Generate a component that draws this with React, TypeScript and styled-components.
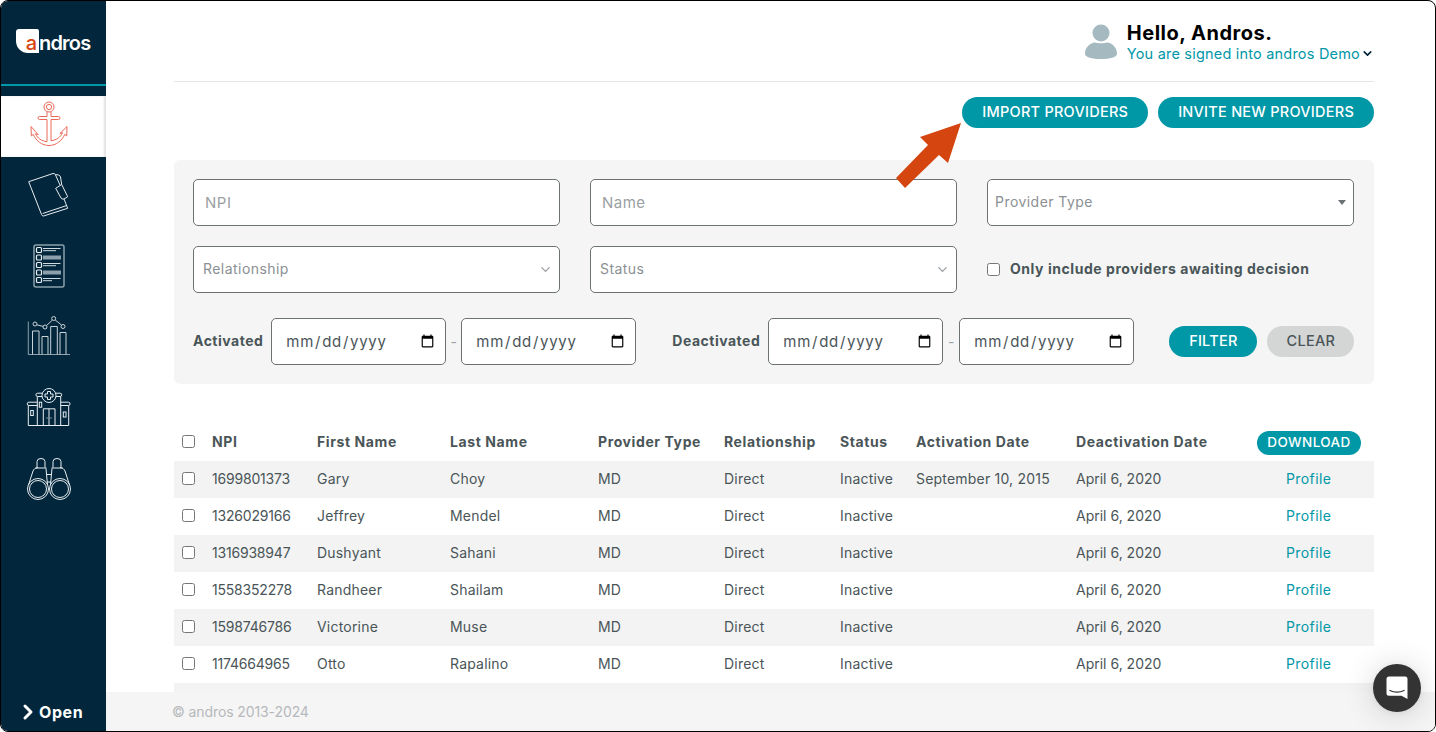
import React from "react";
import styled, { createGlobalStyle } from "styled-components";
import { ChevronDown, ChevronRight } from "lucide-react";

const TEAL = "#0097a7";
const NAVY = "#02263c";
const FONT = `Inter, "Open Sans", "Liberation Sans", sans-serif`;

const GlobalStyle = createGlobalStyle`
  html, body { margin: 0; padding: 0; background: #fff; }
  * { box-sizing: border-box; }
  body { font-family: ${FONT}; color: #4a5558; }
`;

type Provider = { npi: string; first: string; last: string; activated?: string };

const PROVIDERS: Provider[] = [
  { npi: "1699801373", first: "Gary", last: "Choy", activated: "September 10, 2015" },
  { npi: "1326029166", first: "Jeffrey", last: "Mendel" },
  { npi: "1316938947", first: "Dushyant", last: "Sahani" },
  { npi: "1558352278", first: "Randheer", last: "Shailam" },
  { npi: "1598746786", first: "Victorine", last: "Muse" },
  { npi: "1174664965", first: "Otto", last: "Rapalino" },
];

const COLUMN_WIDTHS = [38, 105, 133, 148, 126, 116, 76, 160, 181, 117];

const AnchorIcon = () => (
  <svg width="38" height="48" viewBox="0 0 38 48" fill="none" stroke="#ea6a58" strokeWidth="1">
    <circle cx="19" cy="7" r="5" />
    <circle cx="19" cy="7" r="2.6" />
    <path d="M17 12v4.500h-7.500a1 1 0 0 0 0 3H17v22.200c-5.500-.6-9.500-3.600-11.600-8l2.800 1L1 26.500l.3 9.500 2-1.600C6 40.800 12 45.500 19 45.500s13-4.700 15.700-11.100l2 1.600.3-9.500-7.200 7.200 2.800-1c-2.100 4.400-6.100 7.400-11.600 8V19.500h7.500a1 1 0 0 0 0-3H21V12" />
  </svg>
);

const NotebookIcon = () => (
  <svg width="42" height="44" viewBox="0 0 42 44" fill="none" stroke="#e8edf0" strokeWidth="1">
    <path d="M36 26l3.700 9.300L15.500 43q-1.500 0-2-1.500L.7 8.700 25 .5q1.500-.3 2.300 1L32 12" />
    <path d="M27.300 1.500l3.200.5q1.500.2 2 2l1.200 7.500 6 12.200L36 26q-2 .5-3-1l-5.300-9.700 6-3.800" />
    <path d="M14.700 40.500l24-8" />
  </svg>
);

const ChecklistIcon = () => (
  <svg width="32" height="44" viewBox="0 0 32 44" fill="none">
    <rect x="1" y="1" width="30" height="42" rx="2" stroke="#8ba0ab" strokeWidth="1.500" />
    {[6, 13.500, 21, 28.500, 36].map((y, i) => (
      <g key={y}>
        <rect x="3.500" y={y - 2.500} width="5" height="5" rx="1" stroke="#e8edf0" strokeWidth="1.200" />
        {i % 2 === 0 ? (
          <path d={`M10 ${y - 1.500}h17.500M10 ${y + 0.700}h${i === 4 ? 9 : 13}`} stroke="#e8edf0" strokeWidth="0.900" />
        ) : (
          <rect x="10" y={y - 2} width="18" height="4" fill="#8ba0ab" />
        )}
      </g>
    ))}
  </svg>
);

const ChartIcon = () => (
  <svg width="44" height="42" viewBox="0 0 44 42" fill="none" stroke="#c8d2d7" strokeWidth="1">
    <path d="M1.300 5.500v33h41.700" strokeOpacity="0.700" />
    <path d="M5.500 38.500V15H12v23.500M15 38.500V20.500h6v18M23.700 38.500V10.500h6.600v28M33 38.500V16.500h6v22" />
    <path d="M10 8.800l6 1.600M19.500 9.500 25.500 4M28.200 4l6.300 5" />
    <circle cx="8" cy="8" r="2" />
    <circle cx="18" cy="11" r="2" />
    <circle cx="26.700" cy="2.500" r="2" />
    <circle cx="36" cy="10.500" r="2" />
  </svg>
);

const HospitalIcon = () => (
  <svg width="45" height="44" viewBox="0 0 45 44" fill="none" stroke="#e8edf0" strokeWidth="1">
    <circle cx="23" cy="9.500" r="7" />
    <path d="M21.500 5.500h3v2.500h2.500v3h-2.500v2.500h-3V11H19V8h2.500Z" />
    <path d="M16 7.200h-4.400a1.650 1.650 0 0 0 0 3.300H16M30 7.200h4.100a1.650 1.650 0 0 1 0 3.300H30" />
    <path d="M11.300 16.200H2.900a1.650 1.650 0 0 0 0 3.300h8.400M34.700 16.200h7.700a1.650 1.650 0 0 1 0 3.300h-7.700" />
    <path d="M11.300 10.500v29M34.700 10.500v29M2.300 19.500v20h40.400v-20" />
    <path d="M17.300 39.500V22.800H29v16.700M23 22.800v16.700" />
    <rect x="13.300" y="16.200" width="2.400" height="5" />
    <rect x="4.700" y="24.500" width="2.600" height="5" />
    <rect x="37.300" y="26" width="2.700" height="5" />
    <path d="M20.500 32h1M24.500 32h1" />
  </svg>
);

const BinocularsIcon = () => (
  <svg width="46" height="44" viewBox="0 0 46 44" fill="none" stroke="#e8edf0" strokeWidth="1">
    <circle cx="12" cy="32" r="10.500" />
    <circle cx="12" cy="32" r="8.500" />
    <circle cx="34" cy="32" r="10.500" />
    <circle cx="34" cy="32" r="8.500" />
    <path d="M2.500 28 7 14c1-2 2-3 5-3.500M21.500 28 20 11.500" />
    <path d="M43.500 28 39 14c-1-2-2-3-5-3.500M24.500 28 26 11.500" />
    <path d="M11 10.500V4.500Q11 1.500 15 1.500t4 3V10.500M27 10.500V4.500q0-3 4-3t4 3V10.500" />
    <path d="M9.500 11h11M25.500 11h11M20.500 17.500h5M21 25h4" />
  </svg>
);

const UserIcon = () => (
  <svg width="32" height="36" viewBox="0 0 32 36" fill="#a5b9c0">
    <circle cx="16" cy="9" r="8.500" />
    <path d="M10 18.500c2 1 10 1 12 0 5 .5 10 5 10 11 0 4-7 5.500-16 5.500S0 33.500 0 29.500c0-6 5-10.500 10-11Z" />
  </svg>
);

const ChatIcon = () => (
  <svg width="22" height="24" viewBox="0 0 22 24" fill="#fff">
    <path d="M3 .5h16a2.500 2.500 0 0 1 2.500 2.500v20l-6-3.200H3A2.500 2.500 0 0 1 .5 17.300V3A2.500 2.500 0 0 1 3 .5Z" />
    <path d="M4 14.500c4 2.200 10 2.200 14 0" fill="none" stroke="#333" strokeWidth="1.300" strokeLinecap="round" />
  </svg>
);

const ArrowIcon = () => (
  <svg width="65" height="65" viewBox="0 0 65 65" fill="#d5450f">
    <path d="M65 0 24 14l8 8L0 55l9 10 34-33 9 8Z" />
  </svg>
);

const App: React.FC = () => {
  return (
    <>
      <GlobalStyle />
      <Frame>
        <Sidebar>
          <LogoArea>
            <LogoMark>
              <LogoLetter>a</LogoLetter>
            </LogoMark>
            <LogoText>ndros</LogoText>
          </LogoArea>
          <ActiveNavItem>
            <AnchorIcon />
          </ActiveNavItem>
          <NavList>
            <NavItem>
              <NotebookIcon />
            </NavItem>
            <NavItem>
              <ChecklistIcon />
            </NavItem>
            <NavItem>
              <ChartIcon />
            </NavItem>
            <NavItem>
              <HospitalIcon />
            </NavItem>
            <NavItem>
              <BinocularsIcon />
            </NavItem>
          </NavList>
          <OpenToggle>
            <ChevronRight size={24} strokeWidth={3} />
            <OpenLabel>Open</OpenLabel>
          </OpenToggle>
        </Sidebar>

        <Main>
          <Content>
            <Header>
              <UserIcon />
              <UserText>
                <Hello>Hello, Andros.</Hello>
                <SignedIn>
                  You are signed into andros Demo
                  <ChevronDown size={13} strokeWidth={3} color="#02263c" />
                </SignedIn>
              </UserText>
            </Header>

            <Actions>
              <PillButton>IMPORT PROVIDERS</PillButton>
              <PillButton>INVITE NEW PROVIDERS</PillButton>
              <ArrowMark>
                <ArrowIcon />
              </ArrowMark>
            </Actions>

            <FilterPanel>
              <FilterGrid>
                <TextField placeholder="NPI" />
                <TextField placeholder="Name" />
                <SelectWrap>
                  <NativeSelect $padLeft={7} defaultValue="">
                    <option value="">Provider Type</option>
                  </NativeSelect>
                  <Caret />
                </SelectWrap>
                <SelectWrap>
                  <NativeSelect $padLeft={9} defaultValue="">
                    <option value="">Relationship</option>
                  </NativeSelect>
                  <SelectChevron>
                    <ChevronDown size={15} strokeWidth={2} />
                  </SelectChevron>
                </SelectWrap>
                <SelectWrap>
                  <NativeSelect $padLeft={9} defaultValue="">
                    <option value="">Status</option>
                  </NativeSelect>
                  <SelectChevron>
                    <ChevronDown size={15} strokeWidth={2} />
                  </SelectChevron>
                </SelectWrap>
                <AwaitingLabel>
                  <input type="checkbox" />
                  Only include providers awaiting decision
                </AwaitingLabel>
              </FilterGrid>

              <DateRow>
                <DateGroup>
                  <DateLabel $width={70}>Activated</DateLabel>
                  <DateField type="date" />
                  <Dash $width={15}>-</Dash>
                  <DateField type="date" />
                </DateGroup>
                <DateGroup>
                  <DateLabel $width={88}>Deactivated</DateLabel>
                  <DateField type="date" />
                  <Dash $width={16}>-</Dash>
                  <DateField type="date" />
                </DateGroup>
                <FilterButtons>
                  <PillButton $small>FILTER</PillButton>
                  <ClearButton>CLEAR</ClearButton>
                </FilterButtons>
              </DateRow>
            </FilterPanel>

            <ProviderTable>
              <colgroup>
                {COLUMN_WIDTHS.map((width, i) => (
                  <col key={i} width={width} />
                ))}
              </colgroup>
              <thead>
                <tr>
                  <HeadCell $center>
                    <RowCheck type="checkbox" />
                  </HeadCell>
                  <HeadCell>NPI</HeadCell>
                  <HeadCell>First Name</HeadCell>
                  <HeadCell>Last Name</HeadCell>
                  <HeadCell>Provider Type</HeadCell>
                  <HeadCell>Relationship</HeadCell>
                  <HeadCell>Status</HeadCell>
                  <HeadCell>Activation Date</HeadCell>
                  <HeadCell>Deactivation Date</HeadCell>
                  <DownloadCell>
                    <DownloadButton>DOWNLOAD</DownloadButton>
                  </DownloadCell>
                </tr>
              </thead>
              <tbody>
                {PROVIDERS.map((p) => (
                  <Row key={p.npi}>
                    <Cell $center>
                      <RowCheck type="checkbox" />
                    </Cell>
                    <NpiCell>{p.npi}</NpiCell>
                    <Cell>{p.first}</Cell>
                    <Cell>{p.last}</Cell>
                    <Cell>MD</Cell>
                    <Cell>Direct</Cell>
                    <Cell>Inactive</Cell>
                    <Cell>{p.activated}</Cell>
                    <DateCell>April 6, 2020</DateCell>
                    <ProfileCell>Profile</ProfileCell>
                  </Row>
                ))}
                <Row>
                  <Cell colSpan={10} />
                </Row>
              </tbody>
            </ProviderTable>
          </Content>
          <Footer>© andros 2013-2024</Footer>
        </Main>

        <ChatBubble>
          <ChatIcon />
        </ChatBubble>
      </Frame>
    </>
  );
};

export default App;

const Frame = styled.div`
  position: relative;
  display: flex;
  width: 1436px;
  height: 732px;
  border: 1px solid #000;
  border-radius: 8px;
  overflow: hidden;
  background: #fff;
`;

const Sidebar = styled.aside`
  display: flex;
  flex-direction: column;
  flex: 0 0 105px;
  background: ${NAVY};
`;

const LogoArea = styled.div`
  display: flex;
  align-items: flex-end;
  height: 85px;
  padding: 0 0 31px 15px;
  margin-bottom: 10px;
  border-bottom: 2px solid ${TEAL};
`;

const LogoMark = styled.div`
  display: flex;
  align-items: flex-end;
  justify-content: flex-end;
  width: 23px;
  height: 24px;
  background: #fff;
  border-radius: 3px 2px 0 12px;
`;

const LogoLetter = styled.span`
  color: #d5450f;
  font-size: 20px;
  font-weight: 500;
  line-height: 20px;
  margin-right: 2px;
`;

const LogoText = styled.span`
  color: #fff;
  font-size: 20px;
  font-weight: 600;
  line-height: 20px;
  letter-spacing: -0.8px;
`;

const ActiveNavItem = styled.div`
  display: flex;
  align-items: center;
  justify-content: center;
  height: 61px;
  padding: 0 10px 6px 0;
  background: #fff;
  box-shadow: inset -2px 0 2px rgba(0, 0, 0, 0.12);
`;

const NavList = styled.nav`
  display: flex;
  flex-direction: column;
  flex: 1;
  padding-top: 2px;
`;

const NavItem = styled.div`
  display: flex;
  align-items: center;
  justify-content: center;
  height: 71px;
  padding-right: 10px;
`;

const OpenToggle = styled.div`
  display: flex;
  align-items: center;
  height: 38px;
  padding-left: 15px;
  color: #fff;
`;

const OpenLabel = styled.span`
  margin-left: -1px;
  font-size: 16px;
  font-weight: 700;
  letter-spacing: 0.6px;
`;

const Main = styled.main`
  display: flex;
  flex-direction: column;
  flex: 1;
  min-width: 0;
`;

const Content = styled.div`
  flex: 1;
  min-height: 0;
  overflow: hidden;
  padding: 0 61px 0 68px;
`;

const Header = styled.header`
  display: flex;
  justify-content: flex-end;
  align-items: center;
  gap: 10px;
  height: 81px;
  padding: 1px 0 0;
  border-bottom: 1px solid #e4e6e7;
`;

const UserText = styled.div`
  display: flex;
  flex-direction: column;
`;

const Hello = styled.div`
  color: #000;
  font-size: 20px;
  font-weight: 700;
  line-height: 24px;
  letter-spacing: 0.5px;
`;

const SignedIn = styled.div`
  display: flex;
  align-items: center;
  gap: 1px;
  color: ${TEAL};
  font-size: 14.5px;
  line-height: 17px;
  letter-spacing: 0.2px;
`;

const Actions = styled.div`
  position: relative;
  display: flex;
  justify-content: flex-end;
  gap: 10px;
  padding-top: 15px;
  height: 78px;
`;

const PillButton = styled.button<{ $small?: boolean }>`
  height: 31px;
  width: ${({ $small }) => ($small ? "88px" : "auto")};
  padding: ${({ $small }) => ($small ? "0 0 2px" : "0 20px 2px")};
  border: 0;
  border-radius: 16px;
  background: ${TEAL};
  color: #fff;
  font-family: ${FONT};
  font-size: 14.5px;
  font-weight: 500;
  letter-spacing: 0.25px;
`;

const ClearButton = styled(PillButton)`
  width: 87px;
  padding: 0 0 2px;
  background: #d4d6d6;
  color: #4a5558;
`;

const ArrowMark = styled.div`
  position: absolute;
  top: 41px;
  right: 413px;
  line-height: 0;
`;

const FilterPanel = styled.section`
  display: flex;
  flex-direction: column;
  gap: 25px;
  height: 224px;
  padding: 19px 20px 19px 19px;
  background: #f5f5f5;
  border-radius: 6px;
`;

const FilterGrid = styled.div`
  display: grid;
  grid-template-columns: repeat(3, 367px);
  grid-auto-rows: 47px;
  column-gap: 30px;
  row-gap: 20px;
`;

const TextField = styled.input`
  width: 100%;
  height: 47px;
  padding: 0 11px;
  border: 1px solid #6c7173;
  border-radius: 5px;
  background: #fff;
  font-family: ${FONT};
  font-size: 15px;
  letter-spacing: 0.5px;
  &::placeholder {
    color: #9a9fa3;
    opacity: 1;
  }
`;

const SelectWrap = styled.div`
  position: relative;
`;

const NativeSelect = styled.select<{ $padLeft: number }>`
  appearance: none;
  width: 100%;
  height: 47px;
  padding: 0 24px 2px ${({ $padLeft }) => $padLeft}px;
  border: 1px solid #6c7173;
  border-radius: 5px;
  background: #fff;
  color: #8b9094;
  font-family: ${FONT};
  font-size: 14px;
  letter-spacing: 0.45px;
`;

const Caret = styled.span`
  position: absolute;
  right: 8px;
  top: 21px;
  border-left: 4px solid transparent;
  border-right: 4px solid transparent;
  border-top: 5px solid #6c7173;
`;

const SelectChevron = styled.span`
  position: absolute;
  right: 7px;
  top: 16px;
  color: #9a9fa3;
  line-height: 0;
`;

const AwaitingLabel = styled.label`
  display: flex;
  align-items: center;
  gap: 10px;
  padding-bottom: 2px;
  font-size: 14px;
  font-weight: 700;
  letter-spacing: 0.55px;
  color: #4a5558;
  input {
    margin: 2px 0 0;
    width: 13px;
    height: 13px;
  }
`;

const DateRow = styled.div`
  display: flex;
  align-items: center;
`;

const DateGroup = styled.div`
  display: flex;
  align-items: center;
  margin-right: 36px;
  &:nth-child(2) {
    margin-right: 35px;
  }
`;

const DateLabel = styled.span<{ $width: number }>`
  flex: 0 0 ${({ $width }) => $width}px;
  margin: 0 8px 2px 0;
  font-size: 14px;
  font-weight: 700;
  letter-spacing: 0.5px;
  white-space: nowrap;
`;

const DateField = styled.input`
  width: 175px;
  height: 47px;
  padding: 0 8px 0 13px;
  border: 1px solid #6c7173;
  border-radius: 5px;
  background: #fff;
  color: #4a5558;
  font-family: ${FONT};
  font-size: 15px;
  letter-spacing: 0.7px;
`;

const Dash = styled.span<{ $width: number }>`
  width: ${({ $width }) => $width}px;
  text-align: center;
  color: #9a9fa3;
  font-size: 14px;
`;

const FilterButtons = styled.div`
  display: flex;
  gap: 10px;
`;

const ProviderTable = styled.table`
  width: 1200px;
  margin-top: 39px;
  border-collapse: collapse;
  table-layout: fixed;
`;

const HeadCell = styled.th<{ $center?: boolean }>`
  height: 38px;
  padding: 0 0 2px ${({ $center }) => ($center ? "8px" : "0")};
  text-align: left;
  font-size: 14px;
  font-weight: 700;
  letter-spacing: 0.6px;
  color: #4a5558;
`;

const DownloadCell = styled(HeadCell)`
  padding: 2px 0 0;
`;

const Row = styled.tr`
  height: 37px;
  &:nth-child(odd) {
    background: #f3f3f3;
  }
`;

const Cell = styled.td<{ $center?: boolean }>`
  padding: 0 0 2px ${({ $center }) => ($center ? "8px" : "0")};
  font-size: 14px;
  letter-spacing: 0.2px;
  color: #4a5558;
  white-space: nowrap;
`;

const NpiCell = styled(Cell)`
  letter-spacing: -0.2px;
`;

const DateCell = styled(Cell)`
  letter-spacing: 0;
`;

const ProfileCell = styled(Cell)`
  padding-left: 29px;
  color: ${TEAL};
  letter-spacing: 0.4px;
`;

const RowCheck = styled.input`
  display: block;
  margin: 0;
  width: 13px;
  height: 13px;
`;

const DownloadButton = styled.button`
  width: 104px;
  height: 24px;
  padding: 0 0 2px;
  border: 0;
  border-radius: 12px;
  background: ${TEAL};
  color: #fff;
  font-family: ${FONT};
  font-size: 13.5px;
  font-weight: 500;
  letter-spacing: 0.4px;
`;

const Footer = styled.footer`
  display: flex;
  align-items: center;
  flex: 0 0 39px;
  padding-left: 66px;
  background: #f5f5f5;
  color: #b5b9bc;
  font-size: 14px;
  letter-spacing: -0.1px;
`;

const ChatBubble = styled.div`
  position: absolute;
  right: 14px;
  bottom: 19px;
  display: flex;
  align-items: center;
  justify-content: center;
  width: 48px;
  height: 48px;
  border-radius: 50%;
  background: #333;
  box-shadow: 0 1px 6px rgba(0, 0, 0, 0.06), 0 2px 32px rgba(0, 0, 0, 0.16);
`;
